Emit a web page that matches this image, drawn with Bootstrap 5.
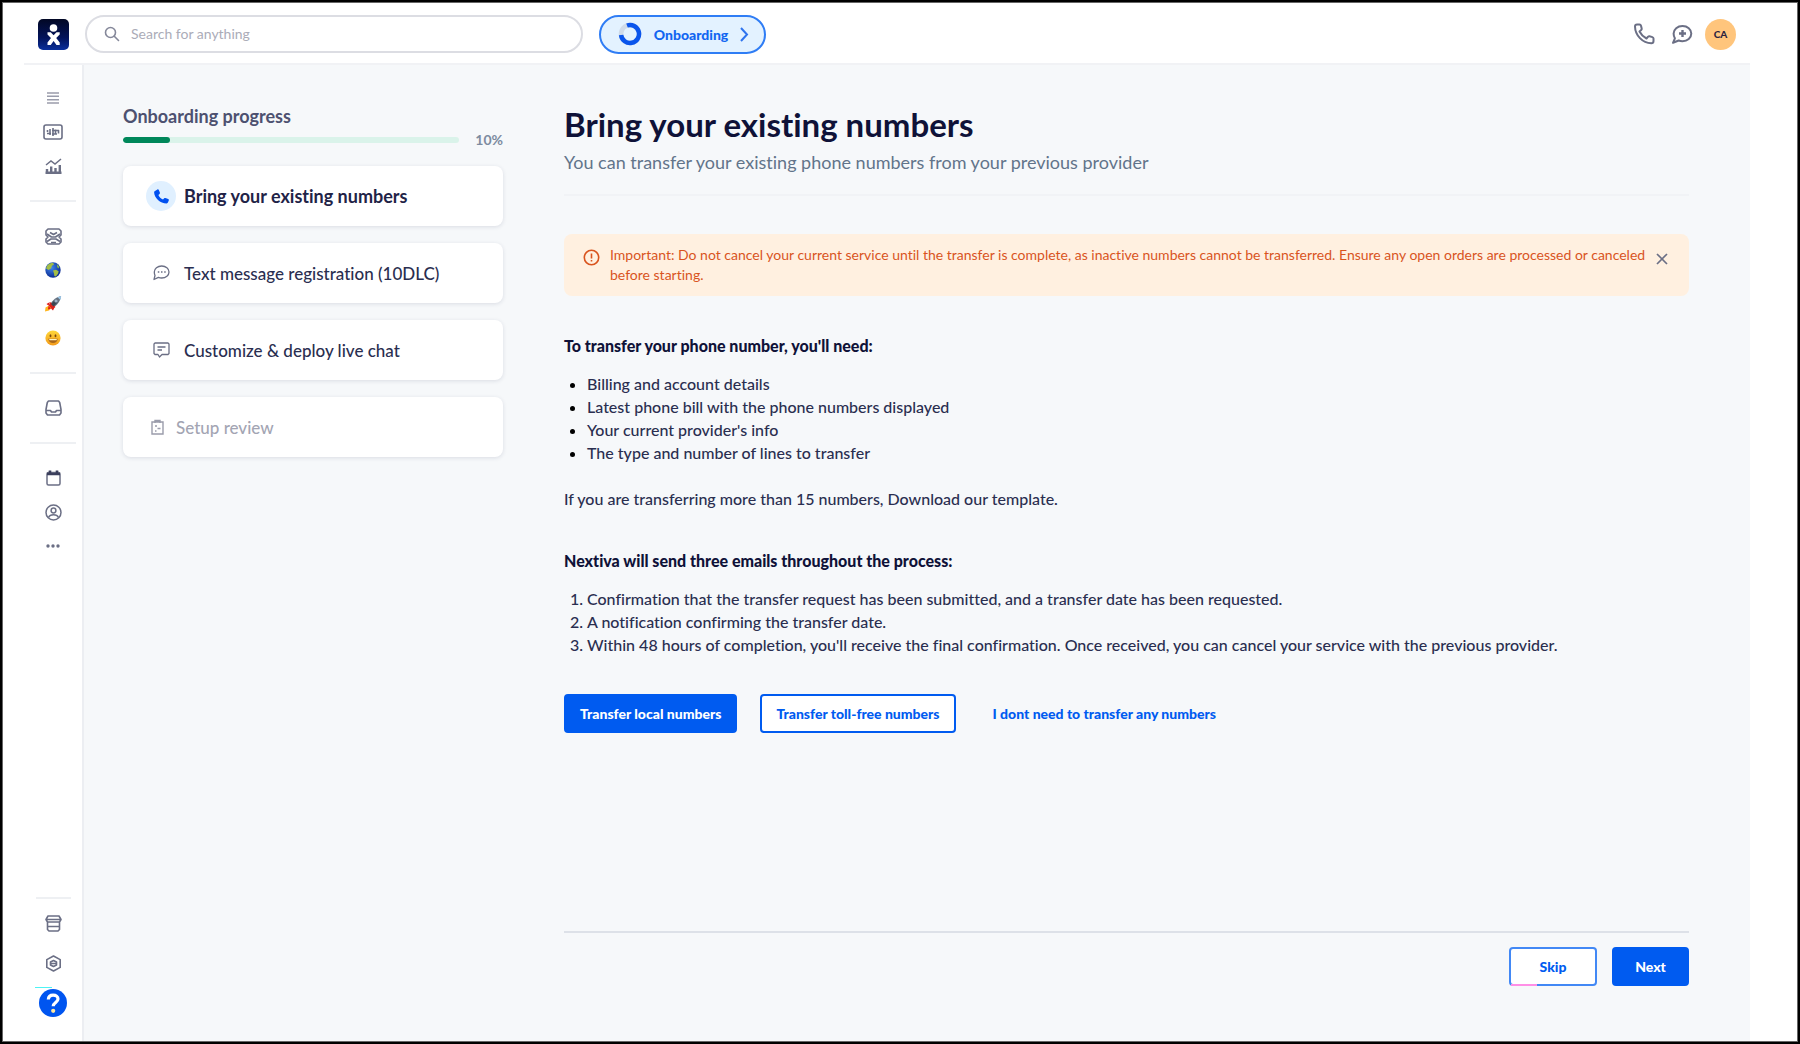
<!DOCTYPE html>
<html lang="en">
<head>
<meta charset="utf-8">
<meta name="viewport" content="width=device-width, initial-scale=1">
<title>Onboarding – Bring your existing numbers</title>
<link href="https://cdn.jsdelivr.net/npm/bootstrap@5.3.0/dist/css/bootstrap.min.css" rel="stylesheet">
<style>
  :root { --brand: #005bf0; --ink: #2a2e50; --ink-dark: #0f1238; --muted-ink: #62748a; --icon: #6b6f85; --rule: #eef0f3; }
  body { font-family: Lato, "Liberation Sans", sans-serif; font-size: 16px; line-height: 23px; color: var(--ink); background: #fff; font-variant-ligatures: none; }
  .window-frame { border: 2px solid #000; }
  .window-body { border: 1px solid #666; padding: 0 47px 0 21px; }
  .topbar { height: 62px; padding: 2px 14px 0; border-bottom: 2px solid #f1f2f5; gap: 16px; }
  .search-box { width: 498px; height: 38px; border: 2px solid #dcdde3; border-radius: 19px; padding: 0 24px 0 17px; gap: 11px; background: #fff; }
  .search-box input { font-size: 14px; line-height: 20px; color: var(--ink); outline: 0; }
  .search-box input::placeholder { color: #abacb8; opacity: 1; }
  .btn-progress { width: 167px; height: 39px; border: 2px solid #2f7df5; border-radius: 20px; background: #e3f2ff; color: #1266f1; font-size: 14px; font-weight: 900; padding: 0 15px 0 17px; }
  .btn-progress:hover { background: #d4eaff; color: #1266f1; border-color: #2f7df5; }
  .top-actions { gap: 12px; }
  .icon-btn { color: var(--icon); padding: 0; border: 0; background: none; line-height: 0; }
  .avatar { width: 31px; height: 31px; border-radius: 50%; background: #ffc57c; color: #2b2440; font-size: 10px; font-weight: 900; border: 0; padding: 0; }
  .siderail { width: 60px; border-right: 2px solid #eceef2; padding: 16px 0 18px; }
  .siderail a { display: flex; align-items: center; justify-content: center; height: 34px; width: 36px; color: var(--icon); }
  .siderail hr { width: 46px; margin: 17px 0; border: 0; border-top: 2px solid var(--rule); opacity: 1; }
  .siderail .rail-foot hr { width: 35px; margin: 0 0 4px; }
  .siderail .rail-foot a { height: 40px; }
  .help-link { position: relative; }
  .help-link::before { content: ""; position: absolute; left: 0; top: 4px; width: 17px; height: 1px; background: #4df3f5; }
  .workspace { background: #f6f8fa; padding: 37px 61px 55px 39px; gap: 61px; }
  .steps-col { width: 380px; }
  .steps-title { font-size: 18px; line-height: 24px; font-weight: 700; color: #4d5170; margin: 2px 0 0; }
  .meter-row { margin-bottom: 14px; }
  .meter { height: 6px; border-radius: 3px; background: #daf3ea; }
  .meter .progress-bar { background: #00875a; border-radius: 3px; }
  .meter-value { font-size: 14px; line-height: 24px; font-weight: 700; color: #7d8ba0; }
  .steps { gap: 17px; }
  .step { height: 60px; border-radius: 8px; background: #fff; box-shadow: 0 1px 4px rgba(30,40,80,.13); padding: 0 23px; gap: 8px; font-size: 17px; font-weight: 500; color: var(--ink); text-decoration: none; }
  .step-icon { width: 30px; height: 30px; border-radius: 50%; color: var(--icon); }
  .step.current { font-size: 18px; font-weight: 700; color: #1f2347; }
  .step.current .step-icon { background: #e0f0ff; color: #0050f0; }
  .step.locked { color: #a3a5b3; gap: 4px; }
  .step.locked .step-icon { color: #9a9cab; margin-left: -4px; }
  h1 { font-size: 33px; line-height: 40px; font-weight: 700; color: var(--ink-dark); margin: 2px 0 6px; }
  .intro { font-size: 18px; line-height: 24px; color: var(--muted-ink); }
  .rule-soft { margin: 20px 0 38px; border-top: 2px solid #f1f3f6; opacity: 1; }
  .notice { background: #fff0e0; color: #d9541e; border-radius: 8px; padding: 11px 21px 11px 19px; font-size: 14px; line-height: 20px; }
  .notice-text { margin-left: 10px; }
  h2 { font-size: 16px; line-height: 23px; font-weight: 900; color: var(--ink-dark); margin: 0 0 15px; }
  .copy { font-weight: 500; }
  .need-block { padding: 38px 0 39px; }
  .after-list { margin: 23px 0 0; }
  .doc-list { padding-left: 23px; margin: 0; }
  ul.doc-list li::marker { color: #000; }
  .actions { gap: 23px; margin-top: 38px; }
  .btn-act { height: 39px; border: 2px solid var(--brand); border-radius: 4px; font-size: 14px; line-height: 20px; font-weight: 900; padding: 0 14px; color: var(--brand); background: #fff; }
  .btn-act:hover { background: #eef5ff; color: var(--brand); border-color: var(--brand); }
  .btn-act.solid { background: var(--brand); color: #fff; }
  .text-link { font-size: 14px; font-weight: 900; color: var(--brand); text-decoration: none; margin-left: 14px; }
  .page-foot { border-top: 2px solid #dde1e8; padding-top: 14px; gap: 15px; }
  .page-foot .btn-act { min-width: 77px; }
  .page-foot .skip { min-width: 88px; border-color: #4288f5; position: relative; }
  .skip::after { content: ""; position: absolute; left: 0; bottom: -2px; width: 26px; height: 2px; background: #ff8fe6; }
</style>
</head>
<body>
<div class="window-frame min-vh-100 d-flex">
<div class="window-body flex-grow-1 d-flex flex-column">
  <header class="topbar d-flex align-items-center">
    <a href="#" aria-label="Home" class="lh-1">
      <svg width="31" height="31" viewBox="0 0 31 31"><defs><linearGradient id="lg" x1="0" y1="0" x2="0" y2="1"><stop offset="0" stop-color="#020824"/><stop offset=".6" stop-color="#03135a"/><stop offset="1" stop-color="#0a2f9c"/></linearGradient></defs><rect width="31" height="31" rx="5" fill="url(#lg)"/><circle cx="15.500" cy="9" r="3.800" fill="#fff"/><path d="M9.500 13.200h3.200l2.900 3 2.900-3h3.200v2.200L18.200 19l3.500 4.600V26h-3.200l-2.900-3.900-2.900 3.900H9.500v-2.400L13 19l-3.500-3.600z" fill="#fff"/></svg>
    </a>
    <form class="search-box d-flex align-items-center" role="search">
      <svg width="16" height="16" viewBox="0 0 16 16" fill="none" stroke="#85889a" stroke-width="1.600" stroke-linecap="round"><circle cx="6.500" cy="6.500" r="5"/><path d="M10.300 10.300 14.500 14.500"/></svg>
      <input type="search" class="border-0 bg-transparent p-0 flex-grow-1" aria-label="Search" placeholder="Search for anything">
    </form>
    <button type="button" class="btn btn-progress d-flex align-items-center justify-content-between">
      <svg width="24" height="24" viewBox="0 0 24 24" fill="none" stroke-width="4.500"><circle cx="12" cy="12" r="9" stroke="#cfdbe9"/><path d="M9 3.500A9 9 0 1 1 3.100 13" stroke="#0a55ec"/></svg>
      <span>Onboarding</span>
      <svg width="9" height="15" viewBox="0 0 9 15" fill="none" stroke="#2f74ee" stroke-width="2"><path d="m1 1 6 6.500L1 14"/></svg>
    </button>
    <div class="top-actions ms-auto d-flex align-items-center">
      <div class="d-flex align-items-center gap-3">
        <button type="button" class="icon-btn" aria-label="Call"><svg width="22" height="22" viewBox="0 0 22 22" fill="none" stroke="currentColor" stroke-width="2" stroke-linejoin="round"><path d="M2 3.500C2 2.300 3 1.500 4 1.500h2.500c.8 0 1.300.5 1.500 1.200l.7 2.800c.1.600 0 1.100-.5 1.500L6.500 8.500c1.500 3 4 5.400 7 7l1.600-1.800c.4-.4.900-.6 1.500-.4l2.800.8c.7.200 1.100.8 1.100 1.500V18c0 1.200-.9 2.300-2.200 2.300C9.500 20 2.200 12.500 2 3.500z"/></svg></button>
        <button type="button" class="icon-btn" aria-label="New message"><svg width="22" height="22" viewBox="0 0 22 22" fill="none" stroke="currentColor" stroke-width="2" stroke-linejoin="round"><path d="M11.500 3c5 0 8.800 3.300 8.800 7.600s-3.800 7.600-8.800 7.600c-1.400 0-2.700-.2-3.800-.7L2 19.800l1.900-4.500c-.8-1.300-1.300-3-1.300-4.700C2.600 6.300 6.500 3 11.500 3z"/><path d="M11.500 7v7M8 10.500h7" stroke-width="2.400"/></svg></button>
      </div>
      <button type="button" class="avatar">CA</button>
    </div>
  </header>

  <div class="d-flex flex-grow-1">
    <nav class="siderail d-flex flex-column align-items-center flex-shrink-0" aria-label="Main">
      <a href="#" aria-label="Menu"><svg width="12" height="12" viewBox="0 0 12 12" stroke="#9a9cab" stroke-width="1.500"><path d="M0 1h12M0 4.300h12M0 7.700h12M0 11h12"/></svg></a>
      <a href="#" aria-label="Dashboard"><svg width="20" height="16" viewBox="0 0 20 16" fill="none" stroke="currentColor" stroke-width="1.600"><rect x="1" y="1" width="18" height="14" rx="2"/><path d="M4.500 8V6M7 11V5M10 12V4M12.500 10V5.500M15.500 9.500V6M4 9.500h4M9 6.500h7M9 10h5"/></svg></a>
      <a href="#" aria-label="Analytics"><svg width="17" height="16" viewBox="0 0 17 16" fill="none" stroke="currentColor"><path d="M1 7 6 3l4 3 6-5" stroke-width="1.500"/><path d="M2 15v-4M6.200 15V8.500M10.500 15v-5M14.800 15V7M.5 14.800h16" stroke-width="2.400"/></svg></a>
      <hr>
      <a href="#" aria-label="Workspace"><svg width="17" height="17" viewBox="0 0 17 17" fill="none" stroke="currentColor" stroke-width="1.600" stroke-linejoin="round"><path d="M3 1h11l2 2v4l-2 2 2 2v3l-2 2H3l-2-2v-3l2-2-2-2V3z"/><path d="m2 6 4.500 3h4L15 6M5 4.500l3.500 2 3.500-2M2 13.500l4-2.500h5l4 2.500M6 14.500h5"/></svg></a>
      <a href="#" aria-label="World"><svg width="16" height="16" viewBox="0 0 16 16"><defs><radialGradient id="gl" cx=".4" cy=".35" r=".7"><stop offset="0" stop-color="#3f86ee"/><stop offset="1" stop-color="#08268c"/></radialGradient></defs><circle cx="8" cy="8" r="7.700" fill="url(#gl)"/><path d="M2.200 3.500C4 1.400 6 .8 8 .7l1 1.800-2 1.300L6 6.500 3.500 8 1 6.500zM8 8.500l3-.8 2.600 1.600-.6 2.500-2.200 2.700-1.500-.5-.3-2.500z" fill="#a3bd45"/><path d="m12 2 2.500 3-1 1.500L12 5z" fill="#7fae50"/></svg></a>
      <a href="#" aria-label="Launch"><svg width="17" height="16" viewBox="0 0 17 16"><path d="M5 9 .5 11.500 0 15.500l4-1 3-3z" fill="#ffb61e"/><path d="M5 6 1.500 8l2 1.500zM10 10.500l-2 4-2-2zM3.500 10 6 12.500l-3 1z" fill="#e01616"/><path d="M5 9.500C6.500 5 10 1.500 16 0c-.5 5.500-4 9.500-8.500 11.800z" fill="#66717f"/><path d="M12.500 1.200 16.200 0l-.8 4z" fill="#9cc9ea"/><path d="m3.500 9.500 2-3.500 5 5-3.500 2z" fill="#d9221c"/><path d="m6 8 4-4 2.500 2.500-4 4z" fill="#3b4652"/><circle cx="11" cy="5" r="1.600" fill="#9fb4c8"/></svg></a>
      <a href="#" aria-label="Mood"><svg width="16" height="16" viewBox="0 0 16 16"><defs><linearGradient id="sm" x1="0" y1="0" x2="0" y2="1"><stop offset="0" stop-color="#ffd83a"/><stop offset="1" stop-color="#f39a1b"/></linearGradient></defs><circle cx="8" cy="8" r="7.600" fill="url(#sm)"/><ellipse cx="5.500" cy="5.800" rx=".9" ry="1.500" fill="#7a4a10"/><ellipse cx="10.500" cy="5.800" rx=".9" ry="1.500" fill="#7a4a10"/><path d="M3.200 8.800h9.600c-.4 2.800-2.300 4.300-4.800 4.300s-4.400-1.500-4.800-4.300z" fill="#a8661a"/><path d="M4 9h8l-.6 1.300H4.600z" fill="#fff3c0"/></svg></a>
      <hr>
      <a href="#" aria-label="Inbox"><svg width="17" height="16" viewBox="0 0 17 16" fill="none" stroke="currentColor" stroke-width="1.600" stroke-linejoin="round"><path d="M3.500 1h10l1.200 1.500L16 9.500V13l-1.500 2h-12L1 13V9.500l1.300-7z"/><path d="M1 10.500h4.500l1 1.500h4l1-1.500H16"/></svg></a>
      <hr>
      <a href="#" aria-label="Calendar"><svg width="15" height="16" viewBox="0 0 15 16" fill="none" stroke="currentColor" stroke-width="1.500"><rect x="1" y="2.500" width="13" height="12.500" rx="1.500"/><path d="M1 4h13M4 .5v3M11 .5v3" stroke="#3b3f5c" stroke-width="2.600"/></svg></a>
      <a href="#" aria-label="Contacts"><svg width="17" height="17" viewBox="0 0 17 17" fill="none" stroke="currentColor" stroke-width="1.500"><circle cx="8.500" cy="8.500" r="7.500"/><circle cx="8.500" cy="6.500" r="2.400"/><path d="M3.500 13.500c1-2.200 3-2.700 5-2.700s4 .5 5 2.700"/></svg></a>
      <a href="#" aria-label="More"><svg width="14" height="4" viewBox="0 0 14 4" fill="currentColor"><circle cx="2" cy="2" r="1.700"/><circle cx="7" cy="2" r="1.700"/><circle cx="12" cy="2" r="1.700"/></svg></a>
      <div class="rail-foot mt-auto d-flex flex-column align-items-center">
        <hr>
        <a href="#" aria-label="Store"><svg width="17" height="17" viewBox="0 0 17 17" fill="none" stroke="currentColor" stroke-width="1.600" stroke-linejoin="round"><path d="M3 1h11l2 3.500L14.500 7h-12L1 4.500zM2.500 7v7.500L4 16h9l1.500-1.500V7M1.500 4.500h14M2.500 11.500h12"/></svg></a>
        <a href="#" aria-label="Settings"><svg width="17" height="17" viewBox="0 0 17 17" fill="none" stroke="currentColor" stroke-width="1.600" stroke-linejoin="round"><path d="m8.500 1 6.700 3.600v7.800L8.500 16l-6.700-3.600V4.600z"/><path d="m8.500 5.500 3 1.500v3l-3 1.500-3-1.500V7zM6 8.500h5"/></svg></a>
        <a href="#" aria-label="Help" class="help-link"><svg width="28" height="28" viewBox="0 0 28 28"><circle cx="14" cy="14" r="14" fill="#0055f0"/><path d="M9.300 10.500c.2-2.800 2-4.400 4.800-4.400 2.900 0 4.900 1.600 4.900 4 0 3.300-4.800 3.600-4.800 7.200" fill="none" stroke="#fff" stroke-width="3.200"/><circle cx="14.200" cy="21.800" r="2.100" fill="#ffe9a0"/></svg></a>
      </div>
    </nav>

    <div class="workspace flex-grow-1 d-flex">
      <aside class="steps-col flex-shrink-0">
        <p class="steps-title" id="prog">Onboarding progress</p>
        <div class="meter-row d-flex align-items-center gap-3">
          <div class="progress meter flex-grow-1" role="progressbar" aria-labelledby="prog" aria-valuenow="10" aria-valuemin="0" aria-valuemax="100"><div class="progress-bar" style="width:14%"></div></div>
          <span class="meter-value">10%</span>
        </div>
        <div class="steps d-flex flex-column">
          <a href="#" class="step current d-flex align-items-center" aria-current="step"><span class="step-icon d-flex align-items-center justify-content-center"><svg width="15" height="15" viewBox="0 0 15 15" fill="currentColor"><path d="M.6 2.200 3.400.4c.6-.3 1.200-.1 1.400.5l1.100 2.700c.2.500 0 1-.3 1.300L4.400 6c.9 2 2.500 3.600 4.600 4.600l1.200-1.300c.3-.4.800-.5 1.200-.3l2.800 1c.6.300.8.900.6 1.400l-.9 2.200c-.2.500-.6.800-1.200.8C6 14.400.4 9 .1 3.200c0-.4.200-.8.500-1z"/></svg></span>Bring your existing numbers</a>
          <a href="#" class="step d-flex align-items-center"><span class="step-icon d-flex align-items-center justify-content-center"><svg width="17" height="16" viewBox="0 0 17 16" fill="none" stroke="currentColor" stroke-width="1.300" stroke-linejoin="round"><path d="M8.700 1c4.200 0 7.300 2.600 7.300 6s-3.100 6-7.300 6c-1.200 0-2.300-.2-3.300-.6L1 14.500l1-4C1.500 9.500 1.300 8.300 1.300 7c0-3.400 3.200-6 7.400-6z"/><path d="M4.800 7h1.500M8 7h1.500M11.200 7h1.500" stroke-width="1.500"/></svg></span>Text message registration (10DLC)</a>
          <a href="#" class="step d-flex align-items-center"><span class="step-icon d-flex align-items-center justify-content-center"><svg width="17" height="16" viewBox="0 0 17 16" fill="none" stroke="currentColor" stroke-width="1.300" stroke-linejoin="round"><path d="M2 1h13l1 1v9.500l-1 1H9L6.500 15 5 12.500H2l-1-1V2z"/><path d="M4.500 5h8M4.500 8H9"/></svg></span>Customize &amp; deploy live chat</a>
          <a href="#" class="step locked d-flex align-items-center" aria-disabled="true"><span class="step-icon d-flex align-items-center justify-content-center"><svg width="13" height="16" viewBox="0 0 13 16" fill="none" stroke="currentColor" stroke-width="1.400"><path d="M1 3h11v12H1zM4 4V1.500h5V4M4 7h2M6.500 9.500h3M4 12h1.500"/></svg></span>Setup review</a>
        </div>
      </aside>

      <main class="flex-grow-1 d-flex flex-column">
        <h1>Bring your existing numbers</h1>
        <p class="intro mb-0">You can transfer your existing phone numbers from your previous provider</p>
        <hr class="rule-soft">
        <div class="notice d-flex align-items-start" role="alert">
          <svg class="flex-shrink-0 mt-1" width="17" height="17" viewBox="0 0 17 17" fill="none" stroke="currentColor" stroke-width="1.600"><circle cx="8.500" cy="8.500" r="7.200"/><path d="M8.500 4.500v5M8.500 11v1.500"/></svg>
          <div class="notice-text flex-grow-1">Important: Do not cancel your current service until the transfer is complete, as inactive numbers cannot be transferred. Ensure any open orders are processed or canceled before starting.</div>
          <button type="button" class="icon-btn mt-1 pt-1" aria-label="Dismiss"><svg width="12" height="12" viewBox="0 0 12 12" stroke="currentColor" stroke-width="1.700"><path d="m1 1 10 10M11 1 1 11"/></svg></button>
        </div>
        <section class="need-block copy">
          <h2>To transfer your phone number, you'll need:</h2>
          <ul class="doc-list">
            <li>Billing and account details</li>
            <li>Latest phone bill with the phone numbers displayed</li>
            <li>Your current provider's info</li>
            <li>The type and number of lines to transfer</li>
          </ul>
          <p class="after-list">If you are transferring more than 15 numbers, Download our template.</p>
        </section>
        <section class="copy">
          <h2>Nextiva will send three emails throughout the process:</h2>
          <ol class="doc-list">
            <li>Confirmation that the transfer request has been submitted, and a transfer date has been requested.</li>
            <li>A notification confirming the transfer date.</li>
            <li>Within 48 hours of completion, you'll receive the final confirmation. Once received, you can cancel your service with the previous provider.</li>
          </ol>
        </section>
        <div class="actions d-flex align-items-center">
          <button type="button" class="btn btn-act solid">Transfer local numbers</button>
          <button type="button" class="btn btn-act">Transfer toll-free numbers</button>
          <a href="#" class="text-link">I dont need to transfer any numbers</a>
        </div>
        <div class="page-foot mt-auto d-flex justify-content-end">
          <button type="button" class="btn btn-act skip">Skip</button>
          <button type="button" class="btn btn-act solid">Next</button>
        </div>
      </main>
    </div>
  </div>
</div>
</div>
<script src="https://cdn.jsdelivr.net/npm/bootstrap@5.3.0/dist/js/bootstrap.bundle.min.js"></script>
</body>
</html>
